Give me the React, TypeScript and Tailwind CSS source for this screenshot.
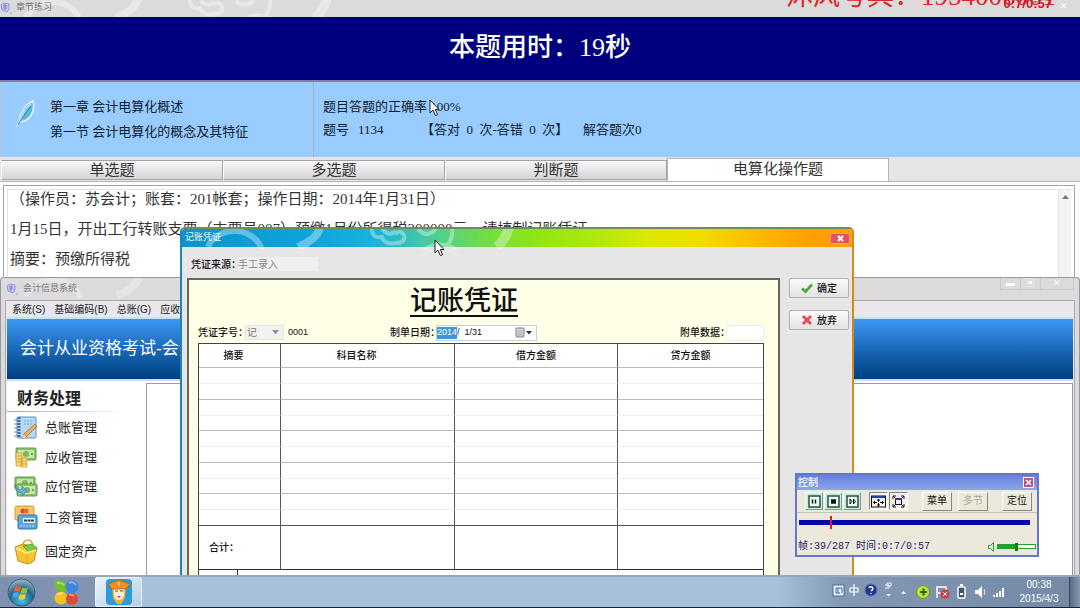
import React from "react";

const SONG = "[font-family:'Liberation_Serif','Noto_Sans_CJK_SC',serif]";
const HEI = "[font-family:'Liberation_Sans','Noto_Sans_CJK_SC',sans-serif]";

function Swirls({ className, stroke, opacity }: { className: string; stroke: string; opacity: number }) {
  return (
    <svg className={className} width="340" height="20" viewBox="0 0 340 20" fill="none" stroke={stroke} opacity={opacity} aria-hidden="true">
      <path d="M26 18a28 24 0 0 1 54 4" strokeWidth="6" />
      <path d="M138-2q-2 12-22 20" strokeWidth="8" />
      <path d="M190 0q0 10 10 8q2 8 14 6q10 0 8-8q-4-6-9-1M200 0q8 8 14 2" strokeWidth="4" />
      <path d="M236 0q8 10 18 0M270 0q2 10-8 20" strokeWidth="4" />
      <path d="M240 21q18-12 36 0" strokeWidth="3" />
      <path d="M327-2q-3 12-12 20" strokeWidth="10" />
    </svg>
  );
}

function AppIcon() {
  return (
    <svg width="13" height="13" viewBox="0 0 13 13" aria-hidden="true">
      <path d="M1 3l3-2 5 1v5l-2 3-5-2z" fill="#c9cdf6" stroke="#8f93dc" />
      <path d="M3 4h4M3 6h4M5 2v6" stroke="#7b80d4" />
      <circle cx="11" cy="11" r="1" fill="#a9acde" />
    </svg>
  );
}

function Cursor({ className }: { className: string }) {
  return (
    <svg className={className} width="11" height="18" viewBox="0 0 11 18" aria-hidden="true">
      <path d="M1 1v13l3-3 2.4 5.6 2.2-1L6.300 10.500H10z" fill="#fff" stroke="#222" />
    </svg>
  );
}

function Feather() {
  return (
    <svg width="20" height="28" viewBox="0 0 20 28" aria-hidden="true">
      <path d="M1 26L4 22C3 13 9 5 17 1c2 8-1 17-9 20l-4 1z" fill="#5cb8de" stroke="#e6f7ff" strokeWidth="1.500" />
      <path d="M5 20C6 13 10 7 15 4" stroke="#a5dcf4" strokeWidth="3" fill="none" />
      <path d="M2 25C6 18 10 12 15 6" stroke="#2781b5" strokeWidth="1" fill="none" />
    </svg>
  );
}

function NotebookIcon() {
  return (
    <svg width="24" height="24" viewBox="0 0 24 24" aria-hidden="true">
      <rect x="3" y="1" width="19" height="21" rx="1" fill="#b7d8f4" stroke="#5c92c4" />
      <path d="M5 1v21" stroke="#3a6ea6" strokeWidth="3" strokeDasharray="2 1" />
      <path d="M0 4h4M0 8h4M0 12h4M0 16h4M0 20h4" stroke="#72889c" />
      <path d="M10 5h9M10 8h9" stroke="#74a4d4" strokeDasharray="2 1" />
      <path d="M8 23l2-5L21 8l2 2-11 11z" fill="#eeb45c" stroke="#a46a28" strokeWidth=".8" />
      <path d="M8 23l1.500-4 2.500 2z" fill="#fbe6c4" />
    </svg>
  );
}

function Bill({ x, y }: { x: number; y: number }) {
  return (
    <g transform={`translate(${x} ${y})`}>
      <rect width="20" height="12" rx="1" fill="#8cc46e" stroke="#5f9a4c" />
      <rect x="2" y="2" width="16" height="8" fill="#c6e6a8" />
      <circle cx="10" cy="6" r="3" fill="#7db568" />
      <circle cx="16" cy="6" r="1" fill="#4d8b3c" />
    </g>
  );
}

function ReceivableIcon() {
  return (
    <svg width="24" height="24" viewBox="0 0 24 24" aria-hidden="true">
      <Bill x={2} y={2} />
      <g fill="#f9d96c" stroke="#d0a23a" strokeWidth=".8">
        <path d="M2 7h6v13H2zM7 12h6v9H7z" />
        <path d="M2 10h6M2 13h6M2 16h6M7 15h6M7 18h6" />
      </g>
    </svg>
  );
}

function PayableIcon() {
  return (
    <svg width="24" height="24" viewBox="0 0 24 24" aria-hidden="true">
      <Bill x={1} y={2} />
      <Bill x={3} y={9} />
      <path d="M1 10q1 6 7 4v-3l5 5-5 5v-3q-7 0-7-8z" fill="#6cb0e2" stroke="#3c7cb4" strokeWidth=".8" />
    </svg>
  );
}

function SalaryIcon() {
  return (
    <svg width="24" height="26" viewBox="0 0 24 26" aria-hidden="true">
      <rect x="1" y="1" width="19" height="14" rx="1.500" fill="#f8c768" stroke="#d0983c" />
      <circle cx="9" cy="6" r="2.500" fill="#d8432f" />
      <circle cx="12" cy="6" r="2.500" fill="#e9663e" />
      <rect x="4" y="10" width="19" height="14" rx="1.500" fill="#5ca5de" stroke="#2f72ae" />
      <rect x="9" y="13" width="12" height="5" fill="#e9f4fc" />
      <path d="M10 15.500h10" stroke="#24415f" strokeWidth="2" strokeDasharray="3 .5" />
      <path d="M6 21h15" stroke="#bcdcf4" strokeDasharray="2 1" />
    </svg>
  );
}

function BasketIcon() {
  return (
    <svg width="24" height="26" viewBox="0 0 24 26" aria-hidden="true">
      <path d="M9 7q0-6 5-6 5 0 5 8" fill="none" stroke="#e9a428" strokeWidth="1.500" />
      <path d="M1 8l8-3 14 4-3 13-6 3-10-3z" fill="#f2c62e" stroke="#c88d16" />
      <path d="M9 7l9-2 5 4-8 4z" fill="#7cc944" stroke="#4b972a" strokeWidth=".8" />
      <path d="M2 9l10 5 10-3" fill="none" stroke="#fff08e" strokeWidth="1.500" />
      <path d="M13 15v9" stroke="#dda51c" />
    </svg>
  );
}

const modules = [
  { label: "总账管理", Icon: NotebookIcon, h: "h-[31px]" },
  { label: "应收管理", Icon: ReceivableIcon, h: "h-[29px]" },
  { label: "应付管理", Icon: PayableIcon, h: "h-[29px]" },
  { label: "工资管理", Icon: SalaryIcon, h: "h-[34px]" },
  { label: "固定资产", Icon: BasketIcon, h: "h-[33px]" },
];

function PracticeHeader() {
  return (
    <>
      <header className={`relative flex h-[17px] shrink-0 items-center overflow-hidden bg-[#dcdbdc] ${HEI}`}>
        <Swirls className="absolute left-0 top-0" stroke="#f4f3f4" opacity={0.55} />
        <div className="relative flex items-center gap-[3px] pb-px text-[9px] text-[#777]">
          <AppIcon />
          <span>章节练习</span>
        </div>
        <div className={`absolute -top-[19px] right-[24px] whitespace-nowrap text-[27px] leading-[30px] text-[#e02626] ${SONG}`}>沐风考典：1954006001</div>
        <span className="absolute -top-[4px] right-[28px] text-[13px] leading-[16px] font-bold text-[#c81e24] [font-family:'Liberation_Sans',sans-serif]">0:7/0:57</span>
        <span className="absolute right-[12px] top-0 text-[9px] leading-[12px] text-white">✕</span>
      </header>
      <div className="flex h-[65px] shrink-0 items-center justify-center border-b-2 border-[#7c7fa8] bg-[#00007e] pb-[2px]">
        <h1 className={`text-[26px] leading-[32px] font-medium text-white ${SONG}`}>本题用时：19秒</h1>
      </div>
      <section className={`flex h-[75px] shrink-0 border-l border-[#b9c7d4] bg-[#99ccff] text-[13px] leading-[16px] text-[#10202e] ${SONG}`}>
        <div className="flex w-[313px] shrink-0 items-start gap-[14px] border-r border-[#a8b4bc] pl-[15px]">
          <div className="pt-[18px]"><Feather /></div>
          <div className="flex flex-col gap-[9px] pt-[17px]">
            <p>第一章 会计电算化概述</p>
            <p>第一节 会计电算化的概念及其特征</p>
          </div>
        </div>
        <div className="relative flex flex-col gap-[7px] pt-[17px] pl-[9px]">
          <p>题目答题的正确率 100%</p>
          <p className="flex">
            <span className="w-[35px]">题号</span>
            <span className="w-[63px]">1134</span>
            <span className="w-[162px]">【答对&nbsp; 0&nbsp; 次-答错&nbsp; 0&nbsp; 次】</span>
            <span>解答题次0</span>
          </p>
          <Cursor className="absolute left-[115px] top-[17px]" />
        </div>
      </section>
      <nav className={`flex h-[24px] shrink-0 items-start bg-[#e6e5e6] pl-px text-[15px] text-[#333] ${SONG}`}>
        {["单选题", "多选题", "判断题"].map((t) => (
          <button key={t} type="button" className="mt-[3px] h-[20px] w-[222px] border border-[#a3a3a6] border-l-white bg-linear-to-b from-[#f8f8f8] to-[#d4d4d6] leading-[18px]">
            {t}
          </button>
        ))}
        <button type="button" className="mt-px h-[23px] w-[222px] border border-b-0 border-[#b4b4b8] bg-white pb-[2px] leading-[20px]">电算化操作题</button>
      </nav>
      <section className="h-[96px] shrink-0 border-t border-[#b4b4b8] bg-white px-[3px] pt-[3px] pr-[5px]">
        <div className="flex h-full border border-[#a3a3ac] border-b-0 p-[3px] pb-0">
          <div className={`flex-1 border-t border-l border-[#e2e2e4] pl-[2px] text-[15px] leading-[30px] text-[#333] ${SONG}`}>
            <div className="-mt-[6px]">
              <p>（操作员：苏会计；账套：201帐套；操作日期：2014年1月31日）</p>
              <p>1月15日，开出工行转账支票（支票号007）预缴1月份所得税200000元，请填制记账凭证</p>
              <p>摘要：预缴所得税</p>
            </div>
          </div>
          <div className="flex w-[13px] justify-center border-t border-l border-[#e6e6e8] bg-[#f4f4f4] pt-[5px]">
            <svg width="7" height="4" viewBox="0 0 7 4" aria-hidden="true"><path d="M0 4l3.500-4L7 4z" fill="#777" /></svg>
          </div>
        </div>
      </section>
    </>
  );
}

function SystemWindow() {
  return (
    <section className={`flex min-h-0 flex-1 flex-col rounded-t-[4px] border border-b-0 border-[#99989c] bg-[#dcdadd] ${HEI}`}>
      <div className="relative flex h-[22px] shrink-0 items-center overflow-hidden pl-[5px]">
        <Swirls className="absolute left-0 top-0" stroke="#eeedef" opacity={0.55} />
        <div className="relative flex flex-1 items-center gap-[4px] text-[9px] text-[#777]">
          <AppIcon />
          <span>会计信息系统</span>
        </div>
        <div className="mr-[5px] flex h-[12px] self-start border border-t-0 border-[#cac8cc] text-[9px] leading-[11px] text-white">
          <button type="button" aria-label="最小化" className="w-[20px] border-r border-[#cac8cc]">▬</button>
          <button type="button" aria-label="最大化" className="w-[20px] border-r border-[#cac8cc]">▣</button>
          <button type="button" aria-label="关闭" className="w-[32px]">✕</button>
        </div>
      </div>
      <div className="mx-[4px] flex min-h-0 flex-1 flex-col border border-b-0 border-[#aaa9ae] bg-[#e9e7ea]">
        <nav className="flex h-[16px] shrink-0 items-center gap-[9px] pl-[6px] text-[10px] text-[#222]">
          {["系统(S)", "基础编码(B)", "总账(G)", "应收(R)"].map((m) => <button key={m} type="button">{m}</button>)}
        </nav>
        <div className="flex min-h-0 flex-1 flex-col px-px">
          <div className="flex h-[64px] shrink-0 items-center border-y-2 border-[#c4e2fb] bg-linear-to-b from-[#3d98f5] via-[#1b69b8] to-[#003f7f] pl-[13px]">
            <h2 className="text-[17px] text-white">会计从业资格考试-会计电算化</h2>
          </div>
          <div className="flex min-h-0 flex-1 bg-white">
            <aside className="w-[139px] shrink-0">
              <h3 className="mt-[6px] pl-[10px] text-[16px] leading-[24px] font-bold text-[#222]">财务处理</h3>
              <div className="h-px w-[120px] bg-linear-to-r from-[#7fb4cc] to-white" />
              <ul>
                {modules.map(({ label, Icon, h }) => (
                  <li key={label}>
                    <a href="#" className={`flex items-center gap-[7px] pl-[7px] text-[13px] text-[#222] ${h}`}>
                      <Icon />{label}
                    </a>
                  </li>
                ))}
              </ul>
            </aside>
            <div className="mt-[2px] flex-1 border border-b-0 border-[#99a]" />
          </div>
        </div>
      </div>
    </section>
  );
}

function VoucherDialog() {
  const line = "border-r border-r-[#555] last:border-r-0";
  const cells = [0, 1, 2, 3];
  return (
    <section role="dialog" aria-label="记账凭证" className={`absolute left-[180px] top-[227px] bottom-0 z-10 flex w-[674px] flex-col overflow-hidden rounded-t-[5px] border-2 border-b-0 border-t-[#6f8c5c] border-l-[#1787b8] border-r-[#d28a1c] bg-[#e7e6e7] text-[10px] text-[#111] ${HEI}`}>
      <div className="relative flex h-[18px] shrink-0 items-center justify-between bg-[linear-gradient(90deg,#0a94cc,#0fa8de_22%,#18b2dc_28%,#30c0c0_33%,#50d090_38%,#70dd48_45%,#90e610_53%,#b0e810_62%,#dce800_70%,#f0dd00_77%,#ffb800_86%,#ff9e00_94%)] pr-[2px] pl-[3px]">
        <Swirls className="absolute left-0 top-0" stroke="#ffffff" opacity={0.35} />
        <span className="relative text-[9px] text-[#eef8fc]">记账凭证</span>
        <button type="button" aria-label="关闭" className="relative flex h-[11px] w-[20px] items-center justify-center rounded-[2px] border border-[#f59a8c] bg-[#e4515c]">
          <svg width="7" height="7" viewBox="0 0 7 7" aria-hidden="true"><path d="M1 1l5 5M6 1L1 6" stroke="#fff" strokeWidth="2" /></svg>
        </button>
      </div>
      <div className="flex h-[31px] shrink-0 items-center pt-[3px] pl-[9px]">
        <label htmlFor="source" className="w-[47px] whitespace-nowrap font-medium">凭证来源：</label>
        <input id="source" disabled defaultValue="手工录入" className="h-[14px] w-[80px] bg-[#f0eff0] text-[#888]" />
      </div>
      <div className="flex min-h-0 flex-1 gap-[9px] pl-[5px]">
        <form className="flex w-[593px] shrink-0 flex-col overflow-hidden border-2 border-b-0 border-[#66665c] bg-[#ffffe7] pr-[14px] pl-[9px]">
          <h2 className={`mt-[8px] ml-[212px] self-start border-b-2 border-[#111] text-[27px] leading-[27px] font-medium ${SONG}`}>记账凭证</h2>
          <div className="mt-[7px] flex h-[17px] shrink-0 items-center">
            <label htmlFor="kind" className="w-[47px] whitespace-nowrap font-medium">凭证字号：</label>
            <div className="relative w-[39px]">
              <select id="kind" disabled className="h-[15px] w-full appearance-none border border-[#e6e4e2] bg-[#f3f2f0] pl-[1px] text-[10px] leading-[12px] text-[#777] opacity-100">
                <option>记</option>
              </select>
              <svg className="absolute right-[5px] top-[5px]" width="7" height="5" viewBox="0 0 7 5" aria-hidden="true"><path d="M0 0h7L3.500 4.500z" fill="#8890a0" /></svg>
            </div>
            <span className="ml-[4px] w-[102px] text-[9px]">0001</span>
            <label htmlFor="year" className="w-[46px] whitespace-nowrap font-medium">制单日期：</label>
            <div className="flex h-[16px] w-[101px] items-center border border-[#bcd3e4] bg-white text-[9px]">
              <input id="year" defaultValue="2014" className="h-[12px] w-[20px] bg-[#3c96dc] text-white" />
              <input aria-label="月/日" defaultValue="/  1/31" className="w-[56px]" />
              <button type="button" aria-label="选择日期" className="ml-[2px]">
                <svg width="18" height="11" viewBox="0 0 18 11" aria-hidden="true">
                  <rect x="1" y="1" width="8" height="9" rx="1" fill="#ddd" stroke="#777" />
                  <path d="M2 4h6M2 6h6M2 8h6M4 3v6M6 3v6" stroke="#a4a4a4" strokeWidth=".6" />
                  <path d="M11 4h6l-3 3.500z" fill="#333" />
                </svg>
              </button>
            </div>
            <label htmlFor="attach" className="ml-auto w-[46px] whitespace-nowrap font-medium">附单数据：</label>
            <input id="attach" className="h-[16px] w-[38px] border border-[#eee] bg-white" />
          </div>
          <table className="mt-[2px] w-full table-fixed border-separate border-spacing-0 border border-[#444] bg-white">
            <colgroup><col className="w-[82px]" /><col className="w-[174px]" /><col className="w-[163px]" /><col /></colgroup>
            <thead>
              <tr className="h-[24px]">
                {["摘要", "科目名称", "借方金额", "贷方金额"].map((t) => (
                  <th key={t} className={`border-b border-b-[#bbb] p-0 font-medium ${line} ${t === "摘要" ? "pr-[12px]" : t === "科目名称" ? "pr-[22px]" : "pr-0"}`}>{t}</th>
                ))}
              </tr>
            </thead>
            <tbody>
              {[0, 1, 2, 3, 4].map((r) => (
                <React.Fragment key={r}>
                  <tr className="h-[16px]">{cells.map((c) => <td key={c} className={`border-b border-b-[#ededed] p-0 ${line}`} />)}</tr>
                  <tr className={r % 2 ? "h-[15px]" : "h-[16px]"}>{cells.map((c) => <td key={c} className={`border-b p-0 ${line} ${r === 4 ? "border-b-[#555]" : "border-b-[#bbb]"}`} />)}</tr>
                </React.Fragment>
              ))}
              <tr className="h-[44px]">
                {cells.map((c) => <td key={c} className={`border-b border-b-[#333] p-0 pl-[10px] font-medium ${line}`}>{c === 0 ? "合计：" : ""}</td>)}
              </tr>
              <tr className="h-[24px]">
                <td colSpan={4} className="p-0"><div className="h-[24px] w-[39px] border-r border-[#333]" /></td>
              </tr>
            </tbody>
          </table>
        </form>
        <div className="flex w-[60px] flex-col gap-[12px]">
          {["确定", "放弃"].map((t, i) => (
            <button key={t} type="button" className="flex h-[20px] items-center justify-center gap-[4px] rounded-[2px] border border-[#b2b1b4] bg-linear-to-b from-[#fafafa] to-[#e2e2e3] font-medium">
              <svg width="12" height="12" viewBox="0 0 12 12" fill="none" aria-hidden="true">
                {i === 0
                  ? <path d="M1 6.500l3.500 3L11 2.500" stroke="#4fa848" strokeWidth="2.800" />
                  : <path d="M2 2l8 8M10 2l-8 8" stroke="#e45058" strokeWidth="3" />}
              </svg>
              {t}
            </button>
          ))}
        </div>
      </div>
    </section>
  );
}

function PlayerControl() {
  const green = "flex h-[18px] w-[18px] items-center justify-center border border-r-[#7b9c8c] border-b-[#7b9c8c] border-l-white border-t-white bg-[#c6f0dc]";
  const grey = "h-[19px] border border-r-[#8a877c] border-b-[#8a877c] border-l-white border-t-white bg-[#ece9d8] leading-[16px] text-[10px]";
  const toggle = "flex h-[18px] w-[19px] items-center justify-center border border-l-[#8a877c] border-t-[#8a877c] border-r-white border-b-white bg-[#f4f2ea]";
  return (
    <section aria-label="控制" className={`absolute right-[41px] bottom-[18px] z-20 flex h-[84px] w-[244px] flex-col border-2 border-[#6676cc] bg-[#ece9dc] text-[#111] ${HEI}`}>
      <div className="flex h-[15px] shrink-0 items-center justify-between bg-linear-to-b from-[#6680d8] to-[#8ca6ec] pr-[3px] pl-px">
        <span className="text-[10px] font-medium text-white">控制</span>
        <button type="button" aria-label="关闭" className="flex h-[11px] w-[11px] items-center justify-center border border-white bg-[#c0507c]">
          <svg width="7" height="7" viewBox="0 0 7 7" aria-hidden="true"><path d="M1 1l5 5M6 1L1 6" stroke="#fff" strokeWidth="1.500" /></svg>
        </button>
      </div>
      <div className="flex h-[23px] shrink-0 items-center border-b border-[#c4c1b4] pl-[8px]">
        <div className="flex gap-px">
          {["M4.500 4.500v4M7.500 4.500v4", "M4 6h5M4 7h5M4 5h5M4 8h5", "M4 4l2 2.500L4 9zM7.500 4l2 2.500-2 2.500z"].map((d, i) => (
            <button key={d} type="button" aria-label={["暂停", "停止", "快进"][i]} className={green}>
              <svg width="13" height="13" viewBox="0 0 13 13" fill="none" aria-hidden="true">
                <rect x="1" y="1" width="11" height="11" fill="#e8fff4" stroke="#2c4c44" strokeWidth="1.500" />
                <path d={d} stroke="#0a1512" strokeWidth={i === 2 ? 1 : 1.5} />
              </svg>
            </button>
          ))}
        </div>
        <div className="ml-[8px] flex gap-px">
          <button type="button" aria-label="适应窗口" className={toggle}>
            <svg width="15" height="13" viewBox="0 0 15 13" fill="none" stroke="#111" aria-hidden="true">
              <rect x=".5" y="1" width="14" height="11" /><path d="M1 2h13" stroke="#23409c" strokeWidth="2" />
              <path d="M2 7.500h4M9 7.500h4M7.500 4v3M7.500 8v4M3.500 6v3M11.500 6v3M6 5h3M6 10h3" />
            </svg>
          </button>
          <button type="button" aria-label="全屏" className={toggle}>
            <svg width="13" height="13" viewBox="0 0 13 13" fill="none" stroke="#111" aria-hidden="true">
              <rect x="3.500" y="3.500" width="6" height="6" /><path d="M3 4h7" stroke="#23409c" strokeWidth="2" />
              <path d="M1 4V1h3M9 1h3v3M12 9v3H9M4 12H1V9M1 1l2 2M12 1l-2 2M12 12l-2-2M1 12l2-2" />
            </svg>
          </button>
        </div>
        <div className="ml-[14px] flex">
          <button type="button" className={`w-[30px] ${grey}`}>菜单</button>
          <button type="button" disabled className={`ml-[6px] w-[30px] text-[#aaa79a] ${grey}`}>多节</button>
          <button type="button" className={`ml-[14px] w-[30px] ${grey}`}>定位</button>
        </div>
      </div>
      <div className="flex h-[19px] shrink-0 items-center px-[2px]">
        <input type="range" aria-label="进度" defaultValue={39} max={287} className="h-[5px] w-[231px] appearance-none bg-[#0505ac] [&::-webkit-slider-thumb]:h-[13px] [&::-webkit-slider-thumb]:w-[2px] [&::-webkit-slider-thumb]:appearance-none [&::-webkit-slider-thumb]:bg-[#e01830]" />
      </div>
      <div className="flex flex-1 items-end justify-between pb-px pl-px text-[10px] text-[#1a1a70] [font-family:'Liberation_Mono','Noto_Sans_CJK_SC',monospace]">
        <span>帧:39/287 时间:0:7/0:57</span>
        <span className="flex h-[15px] items-center gap-[2px]">
          <svg width="7" height="10" viewBox="0 0 7 10" fill="none" stroke="#28a030" aria-hidden="true"><path d="M.5 3.500h2l3-3v9l-3-3h-2z" /></svg>
          <input type="range" aria-label="音量" defaultValue={50} className="mr-px h-[5px] w-[39px] appearance-none border border-[#28a030] bg-[linear-gradient(90deg,#28a030_50%,#ffffff_50%)] [&::-webkit-slider-thumb]:h-[8px] [&::-webkit-slider-thumb]:w-[3px] [&::-webkit-slider-thumb]:appearance-none [&::-webkit-slider-thumb]:bg-[#127a1c]" />
        </span>
      </div>
    </section>
  );
}

function Taskbar() {
  return (
    <footer className={`flex h-[33px] shrink-0 items-center border-t-2 border-b border-t-[#98a5ba] border-b-[#1b2434] bg-[linear-gradient(90deg,#7d90b0,#8494b2_95px,#a5c1dc_141px,#a5c1dc_72%,#8298b4_78%,#7389a6)] ${HEI}`}>
      <button type="button" aria-label="开始" className="ml-[7px]">
        <svg width="29" height="29" viewBox="0 0 29 29" aria-hidden="true">
          <defs><radialGradient id="orb" cx=".5" cy=".8" r=".8"><stop offset="0" stopColor="#3fc4ea" /><stop offset=".55" stopColor="#24648e" /><stop offset="1" stopColor="#a9b9cc" /></radialGradient></defs>
          <circle cx="14.500" cy="14.500" r="13.500" fill="url(#orb)" stroke="#3f5c7c" />
          <path d="M8 9q3-2 6 0l-1.500 5q-3-1.500-6 0z" fill="#ea6332" />
          <path d="M15 9.500q3 1.500 6 0L19.500 15q-3 1.500-6 0z" fill="#8ac441" />
          <path d="M6 15q3-1.500 6 0l-1.500 5q-3-1.500-5 0z" fill="#4ba4e8" />
          <path d="M13 16q3 1.500 6 0l-1.500 5q-3 1.500-6 0z" fill="#fbc935" />
        </svg>
      </button>
      <button type="button" aria-label="浏览器" className="ml-[17px]">
        <svg width="27" height="27" viewBox="0 0 27 27" aria-hidden="true">
          <path d="M2 2q6-2 11 2v9H6q-6-4-4-11z" fill="#6fc02c" />
          <circle cx="19" cy="8" r="6.500" fill="#3e84dc" />
          <circle cx="8" cy="19" r="6.500" fill="#f3c41f" />
          <circle cx="19" cy="20" r="6" fill="#e0483a" />
          <path d="M4 4q4-1 7 2M16 4q4-2 7 2M4 16q3-3 6-1M16 16q3-1 5 1" stroke="#ffffff" opacity=".4" strokeWidth="2" fill="none" />
        </svg>
      </button>
      <button type="button" aria-label="学习软件" className="ml-[15px] flex h-[30px] w-[47px] items-center justify-center rounded-[2px] border border-[#e7f1f9] bg-linear-to-br from-[#edf4fa] to-[#b4cfe6]">
        <svg width="26" height="26" viewBox="0 0 26 26" aria-hidden="true">
          <rect width="26" height="26" rx="4" fill="#2b9cd8" />
          <path d="M6 9h14l-1 10-4 6h-4l-4-6z" fill="#f5af35" />
          <path d="M8 10h10v6q-1 5-5 5t-5-5z" fill="#fff0df" />
          <path d="M2 5l11-4 11 4-4 5H6z" fill="#f18f25" stroke="#b45c12" strokeWidth=".8" />
          <path d="M9 12h3M14 12h3" stroke="#7c3a1a" />
          <path d="M11 17h4l-2 2z" fill="#d8342c" />
          <path d="M13 3v4" stroke="#ffe08c" />
        </svg>
      </button>
      <div className="ml-auto flex items-center text-white">
        <svg width="176" height="24" viewBox="0 0 176 24" fill="none" aria-hidden="true">
          <rect x="1" y="5" width="11" height="11" fill="#eaf2fa" stroke="#4c6c98" />
          <path d="M4 8h6v5M6 13V8M4 8v5h4" stroke="#3466a4" />
          <path d="M18 8h8v4h-8zM22 4v12" stroke="#fff" strokeWidth="1.200" />
          <circle cx="39" cy="10" r="6" fill="#20368e" stroke="#5770b8" />
          <path d="M37 8q1-2 3-1 2 2-1 4M39 13v1" stroke="#fff" strokeWidth="1.500" />
          <path d="M55 3h4v3h-4zM53 5h4v3h-4" stroke="#eef3f8" />
          <path d="M54 14h5l-2.500 2.500zM69 14h5l-2.500-3z" fill="#fff" />
          <circle cx="91" cy="12" r="6.500" fill="#c7dd38" stroke="#6a9c20" />
          <path d="M88 12h7M91.500 8.500v7" stroke="#206c20" strokeWidth="2.200" />
          <path d="M105 6v12M106 7h8v6h-8" stroke="#fff" strokeWidth="1.500" />
          <circle cx="113" cy="14" r="4.500" fill="#cf3c40" />
          <path d="M111 12l4 4M115 12l-4 4" stroke="#fff" />
          <rect x="126" y="7" width="7" height="11" rx="1" stroke="#fff" strokeWidth="1.500" fill="#43546a" />
          <path d="M128 5h3M128 14h3" stroke="#fff" strokeWidth="2" />
          <path d="M143 10h3l4-4v12l-4-4h-3z" fill="#fff" />
          <path d="M152 9q2 3 0 6" stroke="#dfe8f0" />
          <path d="M162 17v-2M165 17v-4M168 17v-6M171 17V8" stroke="#fff" strokeWidth="2" />
        </svg>
        <time className="ml-[6px] w-[50px] text-center text-[10px] leading-[14px]">00:38<br />2015/4/3</time>
        <button type="button" aria-label="显示桌面" className="ml-[5px] h-[30px] w-[11px] border-l border-[#3c4858] bg-linear-to-r from-[#5b6c84] to-[#8698b0]" />
      </div>
    </footer>
  );
}

export default function App() {
  return (
    <div lang="zh-CN" className="flex h-screen flex-col overflow-hidden">
      <main className="relative flex min-h-0 flex-1 flex-col overflow-hidden">
        <PracticeHeader />
        <SystemWindow />
        <VoucherDialog />
        <Cursor className="absolute left-[434px] top-[239px] z-20" />
        <PlayerControl />
      </main>
      <Taskbar />
    </div>
  );
}
